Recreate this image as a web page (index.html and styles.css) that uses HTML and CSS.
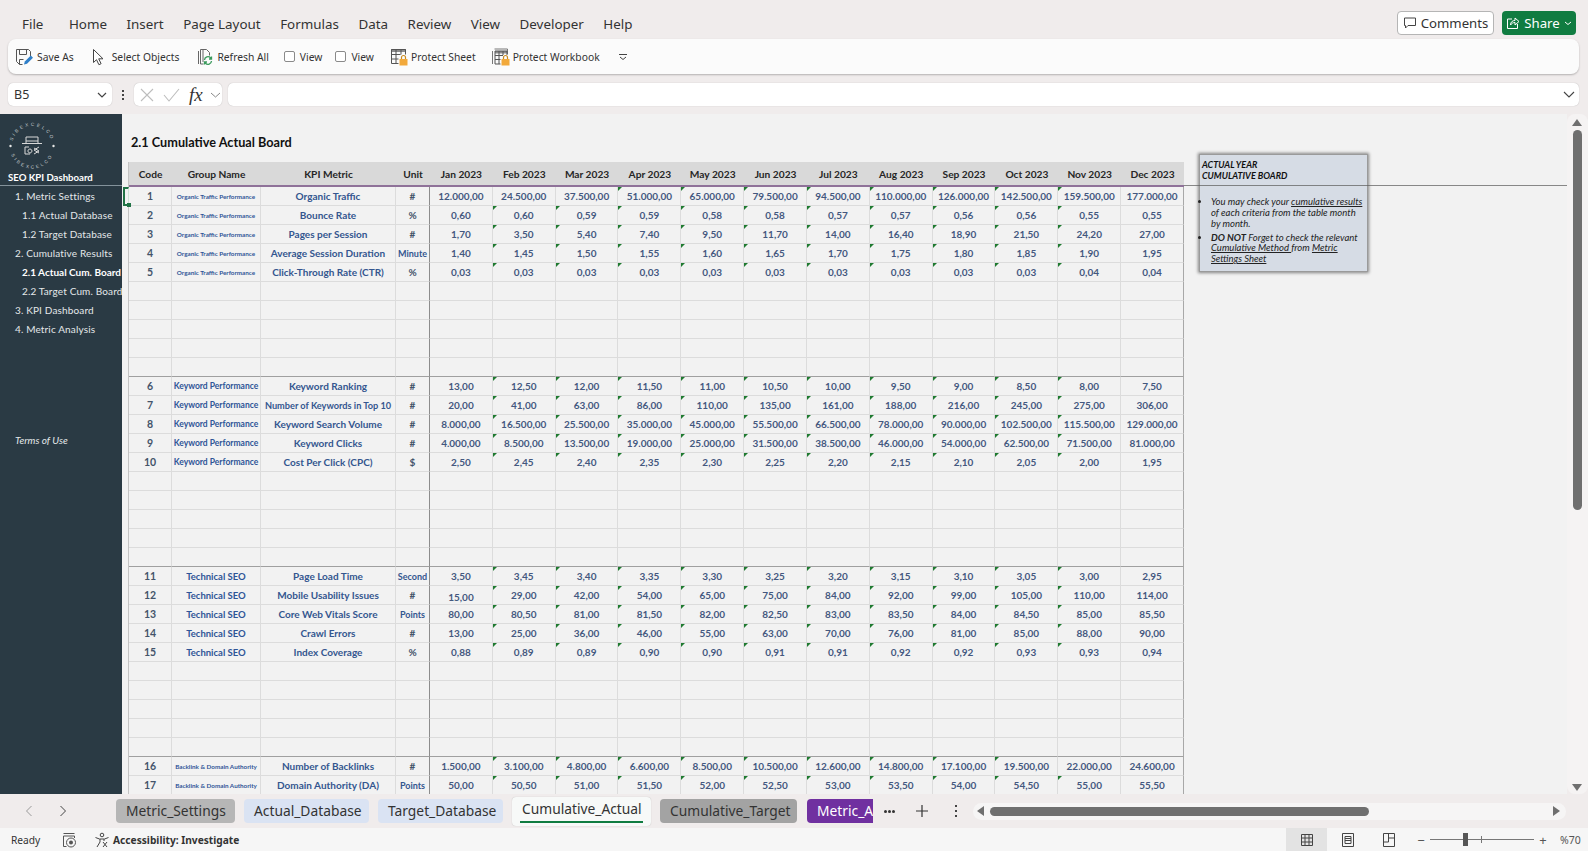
FILE: index.html
```html
<!DOCTYPE html>
<html lang="en">
<head>
    <meta charset="UTF-8">
    <title>SEO KPI Dashboard - Cumulative_Actual</title>
    <link rel="stylesheet" href="styles.css">
</head>
<body>
    <div class="menu-bar">
        <nav class="menu">
            <span class="menu-file">File</span>
            <span>Home</span>
            <span>Insert</span>
            <span>Page Layout</span>
            <span>Formulas</span>
            <span>Data</span>
            <span>Review</span>
            <span>View</span>
            <span>Developer</span>
            <span>Help</span>
        </nav>
        <div class="menu-actions">
            <button class="comments-btn">
                <svg viewBox="0 0 14 14" width="14" height="14"><path fill="none" stroke="#444" d="M1.5 2h11v7.5H5L2.5 12V9.5h-1z"/></svg>
                Comments
            </button>
            <button class="share-btn">
                <svg viewBox="0 0 14 14" width="14" height="14"><path fill="none" stroke="#fff" d="M6 3H1.5v9.500h10V8M4.500 9c0-3 2-4.500 4.500-4.500V2l4 3.500L9 9V6.500C7 6.500 5.500 7.500 4.500 9z"/></svg>
                Share
                <svg viewBox="0 0 8 8" width="8" height="8"><path fill="none" stroke="#fff" d="M1 3l3 2.500L7 3"/></svg>
            </button>
        </div>
    </div>

    <div class="ribbon">
        <div class="rb-item">
            <svg viewBox="0 0 18 18" width="18" height="18">
                <path fill="none" stroke="#555" d="M1.500 1.500h12l2 2v5M1.500 1.500v12l3 3h3M4.500 1.500v5h7v-5M4.500 16.500v-5h4"/>
                <path fill="#2f7fc9" d="M9 16.500l.8-3 6-6 2.200 2.200-6 6z"/>
            </svg>
            Save As
        </div>
        <div class="rb-item rb-select">
            <svg viewBox="0 0 14 18" width="14" height="18"><path fill="#fff" stroke="#444" d="M2.500 1.500v13l3-2.800 2.400 5 2.200-1-2.400-4.900h4.300z"/></svg>
            Select Objects
        </div>
        <div class="rb-item rb-wide">
            <svg viewBox="0 0 16 18" width="16" height="18">
                <path fill="none" stroke="#666" d="M1.500 3v13M3.500 1.500h6l3 3v3M3.500 1.500V16h3M6 1.500V14"/>
                <path fill="none" stroke="#3a9a5c" stroke-width="1.300" d="M7.500 12a3.500 3.500 0 0 1 6-2.200l1 1M14.500 13a3.500 3.500 0 0 1-6 2.200l-1-1M14.500 8.500v2.500H12M7.500 16.500V14H10"/>
            </svg>
            Refresh All
        </div>
        <label class="rb-item"><span class="check-box"></span>View</label>
        <label class="rb-item rb-check2"><span class="check-box"></span>View</label>
        <div class="rb-item rb-protect">
            <svg viewBox="0 0 18 18" width="18" height="18">
                <path fill="#8d8d8d" d="M1 1h15v3H1z"/>
                <path fill="none" stroke="#555" d="M1.500 1.500h14v5M1.500 1.500v14h7M1.500 6.500h9M1.500 11h7M6 1.500v14M11 1.500v5"/>
                <path fill="none" stroke="#c98a1e" stroke-width="1.200" d="M11.500 11V9.500a2 2 0 0 1 4 0V11"/>
                <path fill="#f2a93b" d="M9.500 11h8v6.500h-8z"/>
            </svg>
            Protect Sheet
        </div>
        <div class="rb-item rb-protect-wb">
            <svg viewBox="0 0 18 18" width="18" height="18">
                <path fill="none" stroke="#777" d="M.5 3v13M2.500 1h13v5"/>
                <path fill="#8d8d8d" d="M3 3h12v2.500H3z"/>
                <path fill="none" stroke="#555" d="M3 3h12v4M3 3v13h5.500M3 7.500h8M3 11.500h5.500M7 3v13M11 3v4"/>
                <path fill="none" stroke="#c98a1e" stroke-width="1.200" d="M11.500 11V9.500a2 2 0 0 1 4 0V11"/>
                <path fill="#f2a93b" d="M9.500 11h8v6.500h-8z"/>
            </svg>
            Protect Workbook
        </div>
        <svg class="rb-more" viewBox="0 0 10 8" width="10" height="8"><path fill="none" stroke="#444" d="M1 1.500h8M2 4l3 2.500L8 4"/></svg>
    </div>

    <div class="formula-bar">
        <div class="name-box">
            B5
            <svg viewBox="0 0 10 6" width="10" height="6"><path fill="none" stroke="#444" stroke-width="1.200" d="M1 1l4 4 4-4"/></svg>
        </div>
        <div class="fb-grip"><i></i><i></i><i></i></div>
        <div class="fx-box">
            <svg viewBox="0 0 14 14" width="14" height="14"><path fill="none" stroke="#bdbdbd" stroke-width="1.100" d="M1 1l12 12M13 1L1 13"/></svg>
            <svg viewBox="0 0 17 14" width="17" height="14"><path fill="none" stroke="#bdbdbd" stroke-width="1.100" d="M1 7l5 6L16 1"/></svg>
            <span class="fx-text">fx</span>
            <svg viewBox="0 0 11 6" width="11" height="6"><path fill="none" stroke="#888" d="M1 1l4.500 4L10 1"/></svg>
        </div>
        <div class="formula-input">
            <svg viewBox="0 0 12 7" width="12" height="7"><path fill="none" stroke="#444" stroke-width="1.100" d="M1 1l5 5 5-5"/></svg>
        </div>
    </div>

    <div class="workspace">
        <aside class="sidebar">
            <svg class="logo" viewBox="0 0 50 50" width="50" height="50">
                <defs>
                    <path id="ring-top" d="M5 25a20 20 0 0 1 40 0"/>
                    <path id="ring-bottom" d="M2.500 25a22.500 22.500 0 0 0 45 0"/>
                </defs>
                <text class="logo-ring"><textPath href="#ring-top" startOffset="50%" text-anchor="middle">SIBEXCELCO</textPath></text>
                <text class="logo-ring"><textPath href="#ring-bottom" startOffset="50%" text-anchor="middle">SIBEXCELCO</textPath></text>
                <circle cx="3.500" cy="25" r="1.200" fill="#e8e8e8"/>
                <circle cx="46.500" cy="25" r="1.200" fill="#e8e8e8"/>
                <path fill="none" stroke="#d8d8d8" d="M19 22v-6h12v6M15 22.500h20M19 20h12"/>
                <path fill="none" stroke="#d8d8d8" d="M18 26h4M18 26v7h5M27 27l5 3-5 3M32 26l-5 3 5 3M23 28a2 2 0 1 1-.1 0"/>
            </svg>
            <div class="side-title">SEO KPI Dashboard</div>
            <div class="side-item">1. Metric Settings</div>
            <div class="side-item side-sub">1.1 Actual Database</div>
            <div class="side-item side-sub">1.2 Target Database</div>
            <div class="side-item">2. Cumulative Results</div>
            <div class="side-item side-sub side-active">2.1 Actual Cum. Board</div>
            <div class="side-item side-sub">2.2 Target Cum. Board</div>
            <div class="side-item">3. KPI Dashboard</div>
            <div class="side-item">4. Metric Analysis</div>
            <div class="side-terms">Terms of Use</div>
        </aside>

        <main class="sheet">
            <h1 class="sheet-title">2.1 Cumulative Actual Board</h1>
            <table class="grid">
                <colgroup>
                    <col class="col-code"><col class="col-group"><col class="col-metric"><col class="col-unit">
                    <col><col><col><col><col><col><col><col><col><col><col><col>
                </colgroup>
                <thead>
                    <tr>
                        <th>Code</th><th>Group Name</th><th>KPI Metric</th><th>Unit</th>
                        <th>Jan 2023</th><th>Feb 2023</th><th>Mar 2023</th><th>Apr 2023</th><th>May 2023</th><th>Jun 2023</th>
                        <th>Jul 2023</th><th>Aug 2023</th><th>Sep 2023</th><th>Oct 2023</th><th>Nov 2023</th><th>Dec 2023</th>
                    </tr>
                </thead>
                <tbody id="grid-body"></tbody>
            </table>

            <div class="note-box">
                <p class="note-title">ACTUAL YEAR<br>CUMULATIVE BOARD</p>
                <ul class="note-list">
                    <li>You may check your <u>cumulative results</u> of each criteria from the table month by month.</li>
                    <li><b>DO NOT</b> Forget to check the relevant <u>Cumulative Method </u>from <u>Metric Settings Sheet</u></li>
                </ul>
            </div>
            <div class="freeze-line"></div>
            <div class="cell-select"></div>
        </main>

        <div class="v-scroll">
            <span class="arrow-up"></span>
            <span class="v-thumb"></span>
            <span class="arrow-down"></span>
        </div>
    </div>

    <div class="tab-bar">
        <div class="tab-nav">
            <svg viewBox="0 0 8 12" width="8" height="12"><path fill="none" stroke="#9a9a9a" d="M6.500 1L1.500 6l5 5"/></svg>
            <svg viewBox="0 0 8 12" width="8" height="12"><path fill="none" stroke="#444" d="M1.500 1l5 5-5 5"/></svg>
        </div>
        <div class="tabs">
            <span class="tab tab-gray">Metric_Settings</span>
            <span class="tab tab-blue">Actual_Database</span>
            <span class="tab tab-blue">Target_Database</span>
            <span class="tab tab-active">Cumulative_Actual</span>
            <span class="tab tab-dark">Cumulative_Target</span>
            <span class="tab tab-purple">Metric_Analysis</span>
        </div>
        <div class="tab-dots"><i></i><i></i><i></i></div>
        <svg class="tab-plus" viewBox="0 0 14 14" width="14" height="14"><path stroke="#333" stroke-width="1.200" d="M7 1v12M1 7h12"/></svg>
        <div class="tab-grip"><i></i><i></i><i></i></div>
        <div class="h-scroll">
            <span class="arrow-left"></span>
            <span class="h-thumb"></span>
            <span class="arrow-right"></span>
        </div>
    </div>

    <footer class="status-bar">
        <span class="st-ready">Ready</span>
        <svg class="st-macro" viewBox="0 0 16 16" width="16" height="16">
            <path fill="none" stroke="#555" d="M2.500 1.500h11M2.500 4h11M2.500 4v10.500h3M13.500 4v2"/>
            <circle cx="10" cy="10.500" r="4.500" fill="#f6f6f6" stroke="#555"/>
            <circle cx="10" cy="10.500" r="2" fill="#555"/>
        </svg>
        <svg class="st-access" viewBox="0 0 16 16" width="16" height="16">
            <circle cx="8" cy="3" r="1.800" fill="none" stroke="#444"/>
            <path fill="none" stroke="#444" d="M1.500 5.500l4 1.500h5l4-1.500M6 7v3l-3 5M10 7v2M13 10l-4 5M9 10l4 5"/>
        </svg>
        <span class="st-access-text">Accessibility: Investigate</span>
        <div class="st-right">
            <div class="st-views">
                <span class="view-btn view-on">
                    <svg viewBox="0 0 16 16" width="16" height="16"><path fill="none" stroke="#444" d="M2.500 2.500h11v11h-11zM2.500 6h11M2.500 10h11M6 2.500v11M10 2.500v11"/></svg>
                </span>
                <span class="view-btn">
                    <svg viewBox="0 0 16 16" width="16" height="16"><path fill="none" stroke="#444" d="M2.500 1.500h11v13h-11zM5 4.500h6v7H5zM5 6.500h6M5 8.500h6"/></svg>
                </span>
                <span class="view-btn">
                    <svg viewBox="0 0 16 16" width="16" height="16"><path fill="none" stroke="#444" d="M2.500 1.500h11v13h-11zM2.500 10h5V1.500M7.500 6h6"/></svg>
                </span>
            </div>
            <div class="zoom-ctl">
                <span class="zoom-sign">−</span>
                <div class="zoom-track"><span class="zoom-tick"></span><span class="zoom-knob"></span></div>
                <span class="zoom-sign">+</span>
            </div>
            <span class="zoom-value">%70</span>
        </div>
    </footer>

    <script>
        // code, group, metric, unit, monthly values
        const organic = 'Organic Traffic Performance';
        const keyword = 'Keyword Performance';
        const technical = 'Technical SEO';
        const backlink = 'Backlink & Domain Authority';

        const rows = [
            ['Organic Traffic', '#', '12.000,00 24.500,00 37.500,00 51.000,00 65.000,00 79.500,00 94.500,00 110.000,00 126.000,00 142.500,00 159.500,00 177.000,00'],
            ['Bounce Rate', '%', '0,60 0,60 0,59 0,59 0,58 0,58 0,57 0,57 0,56 0,56 0,55 0,55'],
            ['Pages per Session', '#', '1,70 3,50 5,40 7,40 9,50 11,70 14,00 16,40 18,90 21,50 24,20 27,00'],
            ['Average Session Duration', 'Minute', '1,40 1,45 1,50 1,55 1,60 1,65 1,70 1,75 1,80 1,85 1,90 1,95'],
            ['Click-Through Rate (CTR)', '%', '0,03 0,03 0,03 0,03 0,03 0,03 0,03 0,03 0,03 0,03 0,04 0,04'],
            ['Keyword Ranking', '#', '13,00 12,50 12,00 11,50 11,00 10,50 10,00 9,50 9,00 8,50 8,00 7,50'],
            ['Number of Keywords in Top 10', '#', '20,00 41,00 63,00 86,00 110,00 135,00 161,00 188,00 216,00 245,00 275,00 306,00'],
            ['Keyword Search Volume', '#', '8.000,00 16.500,00 25.500,00 35.000,00 45.000,00 55.500,00 66.500,00 78.000,00 90.000,00 102.500,00 115.500,00 129.000,00'],
            ['Keyword Clicks', '#', '4.000,00 8.500,00 13.500,00 19.000,00 25.000,00 31.500,00 38.500,00 46.000,00 54.000,00 62.500,00 71.500,00 81.000,00'],
            ['Cost Per Click (CPC)', '$', '2,50 2,45 2,40 2,35 2,30 2,25 2,20 2,15 2,10 2,05 2,00 1,95'],
            ['Page Load Time', 'Second', '3,50 3,45 3,40 3,35 3,30 3,25 3,20 3,15 3,10 3,05 3,00 2,95'],
            ['Mobile Usability Issues', '#', '15,00 29,00 42,00 54,00 65,00 75,00 84,00 92,00 99,00 105,00 110,00 114,00'],
            ['Core Web Vitals Score', 'Points', '80,00 80,50 81,00 81,50 82,00 82,50 83,00 83,50 84,00 84,50 85,00 85,50'],
            ['Crawl Errors', '#', '13,00 25,00 36,00 46,00 55,00 63,00 70,00 76,00 81,00 85,00 88,00 90,00'],
            ['Index Coverage', '%', '0,88 0,89 0,89 0,90 0,90 0,91 0,91 0,92 0,92 0,93 0,93 0,94'],
            ['Number of Backlinks', '#', '1.500,00 3.100,00 4.800,00 6.600,00 8.500,00 10.500,00 12.600,00 14.800,00 17.100,00 19.500,00 22.000,00 24.600,00'],
            ['Domain Authority (DA)', 'Points', '50,00 50,50 51,00 51,50 52,00 52,50 53,00 53,50 54,00 54,50 55,00 55,50']
        ];

        const gridBody = document.getElementById('grid-body');

        function addCell(tr, text, className) {
            const td = document.createElement('td');
            td.textContent = text;
            if (className) td.className = className;
            tr.appendChild(td);
        }

        function groupOf(code) {
            if (code <= 5) return [organic, 'g-tiny'];
            if (code <= 10) return [keyword, 'g-small'];
            if (code <= 15) return [technical, 'g-normal'];
            return [backlink, 'g-tiny'];
        }

        // green error marks: first and last flagged month differ on a few rows
        function isFlagged(code, month) {
            if (month === 0 || month === 11) return false;
            if (code === 1) return month >= 3;
            if (code === 16) return month <= 9;
            return true;
        }

        function addRow(code, last) {
            const tr = document.createElement('tr');
            if (last) tr.className = 'sec-end';
            if (code) {
                const row = rows[code - 1];
                const group = groupOf(code);
                addCell(tr, code, 'c-code');
                addCell(tr, group[0], 'c-group ' + group[1]);
                addCell(tr, row[0], row[0].length > 26 ? 'c-metric c-long' : 'c-metric');
                addCell(tr, row[1], row[1].length > 4 ? 'c-unit c-unit-word' : 'c-unit');
                row[2].split(' ').forEach((val, m) => {
                    let cls = 'c-val';
                    if (isFlagged(code, m)) cls += ' flag';
                    if (code === 12 && m === 0) cls += ' c-low';
                    addCell(tr, val, cls);
                });
            } else {
                for (let i = 0; i < 16; i++) addCell(tr, '', i === 3 ? 'c-unit' : '');
            }
            gridBody.appendChild(tr);
        }

        let code = 1;
        for (let s = 0; s < 3; s++) {
            for (let i = 0; i < 5; i++) addRow(code++, false);
            for (let i = 0; i < 5; i++) addRow(0, i === 4);
        }
        addRow(16, false);
        addRow(17, false);
    </script>
</body>
</html>
```

FILE: styles.css
```css
* {
    box-sizing: border-box;
}
html, body {
    margin: 0;
    height: 851px;
    overflow: hidden;
}
body {
    width: 1588px;
    display: flex;
    flex-direction: column;
    background-color: #f0ecec;
    font-family: "Noto Sans", sans-serif;
    color: #333;
}

/* top menu */
.menu-bar {
    height: 39px;
    display: flex;
    justify-content: space-between;
    padding: 11px 12px 0 22px;
    flex-shrink: 0;
}
.menu {
    display: flex;
    gap: 19.5px;
    font-size: 13.4px;
    line-height: 26px;
    height: 26px;
}
.menu-file {
    margin-right: 6px;
}
.menu-actions {
    display: flex;
    gap: 8px;
    height: 24px;
}
.menu-actions button {
    display: flex;
    align-items: center;
    gap: 4px;
    border-radius: 4px;
    font-family: inherit;
    font-size: 13.2px;
    padding: 0;
    justify-content: center;
}
.comments-btn {
    width: 97px;
    background-color: #fff;
    color: #333;
    border: 1px solid #b5b5b5;
}
.share-btn {
    width: 74px;
    background-color: #107c41;
    color: #fff;
    border: none;
}

/* ribbon */
.ribbon {
    height: 35px;
    margin: 0 9px 0 8px;
    padding-left: 7px;
    display: flex;
    align-items: center;
    gap: 15px;
    background-color: #fbfbfb;
    border-radius: 8px;
    box-shadow: 0 1px 2px rgba(0,0,0,0.25);
    font-size: 10.3px;
    flex-shrink: 0;
}
.rb-item {
    display: flex;
    align-items: center;
    gap: 4px;
    white-space: nowrap;
}
.rb-wide {
    margin-left: 3px;
}
.rb-select {
    margin-left: 2px;
    gap: 7px;
}
.rb-check2 {
    margin-left: -2px;
}
.rb-protect {
    margin-left: 1px;
    gap: 3px;
}
.rb-protect-wb {
    margin-left: 1px;
    gap: 3px;
}
.check-box {
    width: 11px;
    height: 11px;
    margin-right: 1px;
    background-color: #fff;
    border: 1px solid #8a8a8a;
    border-radius: 2px;
}
.rb-more {
    margin-left: 3px;
}

/* formula bar */
.formula-bar {
    height: 23px;
    margin: 9px 9px 8px 8px;
    display: flex;
    flex-shrink: 0;
}
.formula-bar > div {
    background-color: #fff;
    border-radius: 5px;
    box-shadow: 0 0 1px rgba(0,0,0,0.3);
}
.name-box {
    width: 104px;
    display: flex;
    align-items: center;
    justify-content: space-between;
    padding: 0 5px 0 6px;
    font-size: 12.5px;
}
.formula-bar .fb-grip {
    width: 22px;
    background: none;
    box-shadow: none;
    display: flex;
    flex-direction: column;
    align-items: center;
    justify-content: center;
    gap: 2px;
}
.fb-grip i, .tab-grip i {
    display: block;
    width: 2px;
    height: 2px;
    background-color: #444;
}
.fx-box {
    width: 88px;
    display: flex;
    align-items: center;
    padding-left: 6px;
    gap: 9px;
}
.fx-text {
    width: 15px;
    margin-right: -3px;
    font-family: "Liberation Serif", serif;
    font-style: italic;
    font-size: 19px;
    line-height: 20px;
    color: #333;
}
.formula-input {
    flex: 1;
    margin-left: 6px;
    display: flex;
    align-items: center;
    justify-content: flex-end;
    padding-right: 4px;
}

/* sheet area */
.workspace {
    height: 680px;
    display: flex;
    flex-shrink: 0;
}
.sidebar {
    width: 122px;
    background-color: #2a3a44;
    color: #e4e8ea;
    font-family: Lato, sans-serif;
    font-size: 10px;
    letter-spacing: 0.15px;
    flex-shrink: 0;
    display: flex;
    flex-direction: column;
}
.logo {
    display: block;
    margin: 7px 0 0 7px;
    height: 50px;
}
.logo-ring {
    font-family: "Liberation Sans", sans-serif;
    font-size: 4.6px;
    letter-spacing: 2.3px;
    fill: #c4cacd;
}
.side-title {
    height: 15px;
    padding-left: 8px;
    font-size: 9.6px;
    line-height: 14px;
    margin-bottom: 1px;
    border-bottom: 1px solid #83929b;
    font-weight: bold;
    color: #fff;
    letter-spacing: 0;
}
.side-item {
    height: 19px;
    line-height: 19px;
    padding-left: 15px;
    white-space: nowrap;
}
.side-sub {
    padding-left: 22px;
}
.side-active {
    font-weight: bold;
    color: #fff;
    letter-spacing: 0;
}
.side-terms {
    height: 19px;
    line-height: 19px;
    margin-top: 92px;
    padding-left: 15px;
    font-style: italic;
    letter-spacing: 0;
}

.sheet {
    position: relative;
    width: 1445px;
    flex-shrink: 0;
    overflow: hidden;
    background-color: #f2f2f2;
    padding-left: 6px;
    font-family: Lato, sans-serif;
}
.sheet-title {
    margin: 0;
    height: 48px;
    padding: 20px 0 0 3px;
    font-size: 12.7px;
    line-height: 16px;
    font-weight: bold;
    color: #111;
}
.grid {
    width: 1056px;
    table-layout: fixed;
    border-collapse: separate;
    border-spacing: 0;
    border-left: 1px solid #c4c4c4;
}
.col-code { width: 43px; }
.col-group { width: 89px; }
.col-metric { width: 135px; }
.col-unit { width: 34px; }
.grid th {
    height: 25px;
    padding: 0;
    background-color: #d9d9d9;
    border-bottom: 2px solid #8f7299;
    font-size: 10.2px;
    font-weight: bold;
    color: #262626;
}
.grid td {
    height: 19px;
    padding: 0;
    border-right: 1px solid #dcdcdc;
    border-bottom: 1px solid #dcdcdc;
    text-align: center;
    white-space: nowrap;
    overflow: hidden;
    font-size: 10px;
    font-weight: bold;
    color: #44546a;
}
.grid td:last-child {
    border-right: 1px solid #a8a8a8;
}
.sec-end td {
    border-bottom: 1px solid #a0a0a0;
}
.grid td.c-unit {
    border-right: 1px solid #8c8c8c;
}
.grid td.c-code {
    font-size: 10.5px;
}
.grid td.c-group {
    color: #2f5597;
}
.grid td.g-tiny {
    font-size: 6.3px;
}
.grid td.g-small {
    font-size: 8.5px;
}
.grid td.g-normal {
    font-size: 9.5px;
}
.grid td.c-metric {
    color: #34568f;
    font-size: 10px;
}
.grid td.c-long {
    font-size: 9.2px;
}
.grid td.c-unit-word {
    font-size: 9px;
    color: #34568f;
}
.grid td.c-val {
    position: relative;
    color: #44587f;
}
.grid td.c-low {
    padding-top: 3px;
}
.flag::before {
    content: "";
    position: absolute;
    left: 0;
    top: -1px;
    border-top: 5px solid #1f7a30;
    border-right: 5px solid transparent;
}
.note-box {
    position: absolute;
    left: 1077px;
    top: 40px;
    width: 169px;
    height: 118px;
    padding: 5px 3px 0 2px;
    background-color: #d6dce5;
    border: 1px solid #9a9a9a;
    box-shadow: 0 0 3px 1px rgba(0,0,0,0.45);
    font-size: 9px;
    line-height: 10.7px;
    font-style: italic;
    color: #222;
}
.note-title {
    margin: 0 0 16px 0;
    font-weight: bold;
    color: #111;
}
.note-list {
    margin: 0;
    padding: 0 0 0 9px;
    font-size: 9.5px;
}
.note-list li {
    margin-bottom: 3px;
}
.freeze-line {
    position: absolute;
    left: 1062px;
    right: 0;
    top: 71px;
    height: 1px;
    background-color: rgba(90,90,90,0.7);
}
.cell-select {
    position: absolute;
    left: 1px;
    top: 73px;
    width: 6px;
    height: 19px;
    border: 2px solid #217346;
    border-right: 1px solid #cfe3d6;
}
.cell-select::after {
    content: "";
    position: absolute;
    right: -3px;
    bottom: -3px;
    width: 4px;
    height: 4px;
    background-color: #217346;
}

.v-scroll {
    position: relative;
    flex: 1;
    background-color: #f5f3f3;
    border-radius: 8px;
}
.v-thumb {
    position: absolute;
    left: 6px;
    top: 16px;
    width: 9px;
    height: 380px;
    background-color: #6f6f6f;
    border-radius: 5px;
}
.arrow-up, .arrow-down {
    position: absolute;
    left: 5px;
    border-left: 5px solid transparent;
    border-right: 5px solid transparent;
}
.arrow-up {
    top: 5px;
    border-bottom: 7px solid #6f6f6f;
}
.arrow-down {
    bottom: 3px;
    border-top: 7px solid #6f6f6f;
}

/* sheet tabs */
.tab-bar {
    height: 34px;
    display: flex;
    align-items: center;
    flex-shrink: 0;
}
.tab-nav {
    width: 116px;
    display: flex;
    gap: 26px;
    padding-left: 25px;
}
.tabs {
    width: 757px;
    display: flex;
    gap: 9px;
    overflow: hidden;
    align-items: center;
    height: 34px;
    font-size: 13.8px;
    line-height: 24px;
}
.tab {
    height: 24px;
    padding: 0 10px;
    border-radius: 4px;
    white-space: nowrap;
    flex-shrink: 0;
    text-align: center;
}
.tab-gray { background-color: #b6b6b6; width: 119px; }
.tab-blue { background-color: #dae3f3; width: 125px; }
.tab-active {
    width: 139px;
    height: 29px;
    line-height: 24px;
    background-color: #f7f9f8;
    box-shadow: 0 0 1px rgba(0,0,0,0.25);
    position: relative;
}
.tab-active::after {
    content: "";
    position: absolute;
    left: 8px;
    right: 8px;
    bottom: 3px;
    height: 2px;
    background-color: #107c41;
}
.tab-dark { background-color: #a3a3a3; width: 137px; }
.tab-purple {
    background-color: #7030a0;
    color: #fff;
    width: 90px;
    border-radius: 4px 0 0 4px;
    margin-left: 1px;
    text-align: left;
}
.tab-dots {
    width: 32px;
    display: flex;
    justify-content: center;
    gap: 1px;
}
.tab-dots i {
    display: block;
    width: 3px;
    height: 3px;
    border-radius: 50%;
    background-color: #333;
}
.tab-plus {
    margin-left: 10px;
}
.tab-grip {
    width: 14px;
    margin-left: 20px;
    display: flex;
    flex-direction: column;
    align-items: center;
    gap: 3px;
}
.h-scroll {
    position: relative;
    width: 593px;
    height: 17px;
    margin-left: 10px;
    background-color: #f6f5f5;
    border-radius: 9px;
}
.h-thumb {
    position: absolute;
    left: 17px;
    top: 4px;
    width: 379px;
    height: 9px;
    background-color: #6f6f6f;
    border-radius: 5px;
}
.arrow-left, .arrow-right {
    position: absolute;
    top: 3px;
    border-top: 5px solid transparent;
    border-bottom: 5px solid transparent;
}
.arrow-left {
    left: 4px;
    border-right: 7px solid #6f6f6f;
}
.arrow-right {
    right: 6px;
    border-left: 7px solid #6f6f6f;
}

/* status bar */
.status-bar {
    height: 23px;
    display: flex;
    align-items: center;
    background-color: #f6f6f6;
    font-size: 10.2px;
    flex-shrink: 0;
}
.st-ready {
    margin-left: 11px;
    width: 50px;
}
.st-access {
    margin-left: 17px;
}
.st-access-text {
    margin-left: 3px;
    font-weight: bold;
    color: #333;
}
.st-macro {
    flex-shrink: 0;
}
.st-right {
    margin-left: auto;
    width: 302px;
    display: flex;
    align-items: center;
}
.st-views {
    display: flex;
    height: 23px;
}
.view-btn {
    width: 41px;
    height: 23px;
    display: flex;
    align-items: center;
    justify-content: center;
}
.view-on {
    background-color: #e3e3e3;
}
.zoom-ctl {
    margin-left: 7px;
    display: flex;
    align-items: center;
    gap: 4px;
}
.zoom-sign {
    width: 10px;
    text-align: center;
    font-size: 13px;
    color: #555;
}
.zoom-track {
    position: relative;
    width: 104px;
    height: 1px;
    background-color: #777;
}
.zoom-tick {
    position: absolute;
    left: 51px;
    top: -3px;
    width: 1px;
    height: 7px;
    background-color: #777;
}
.zoom-knob {
    position: absolute;
    left: 33px;
    top: -6px;
    width: 5px;
    height: 13px;
    background-color: #555;
}
.zoom-value {
    margin-left: 12px;
    font-size: 10.5px;
    color: #555;
}
```
